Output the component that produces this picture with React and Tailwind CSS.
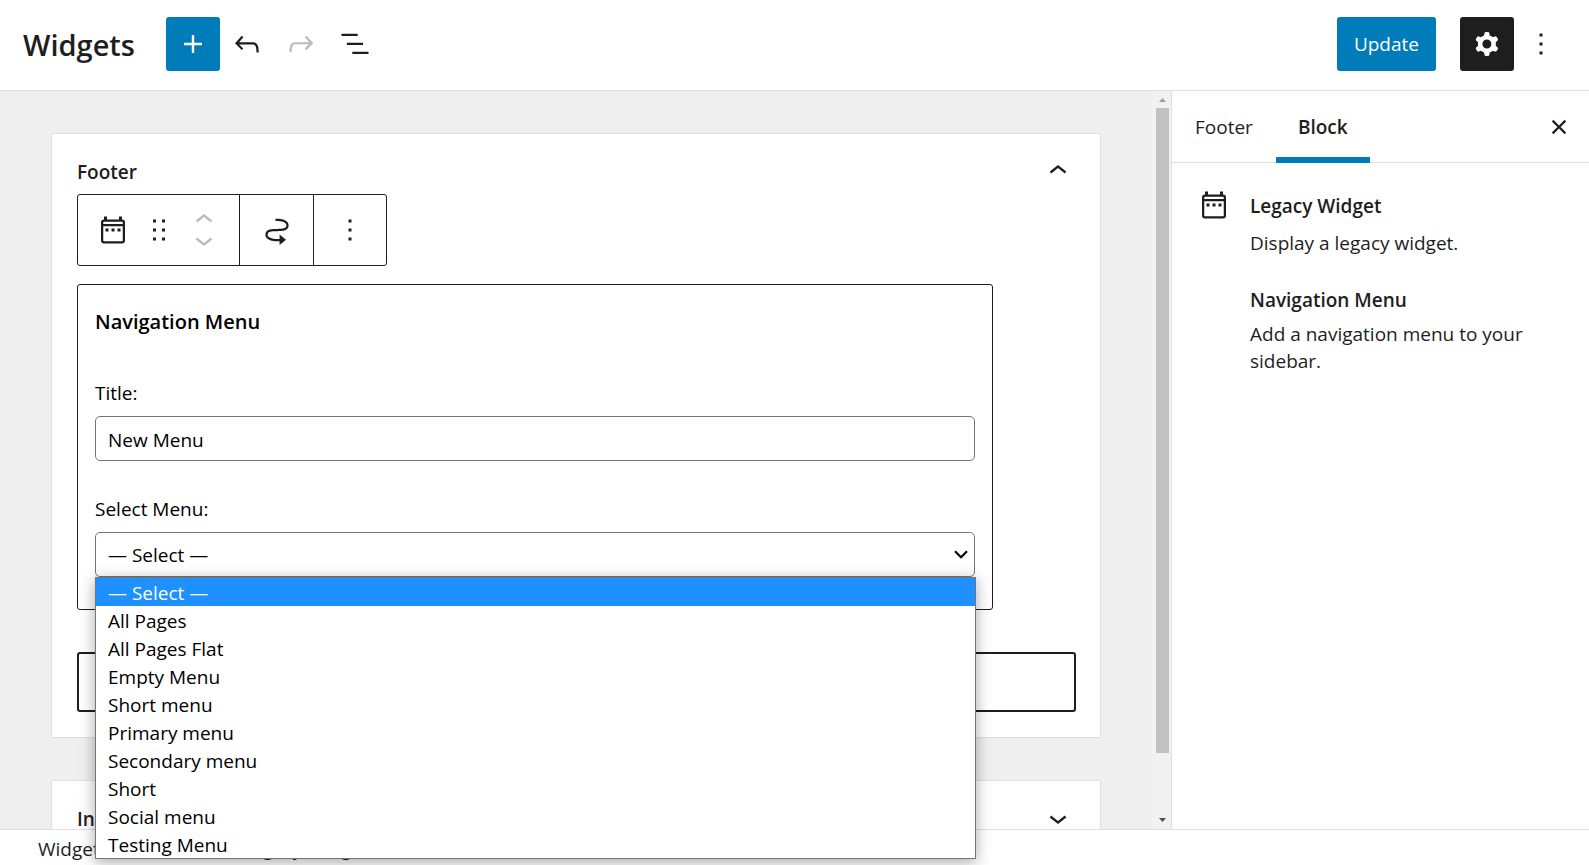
import React, { useState } from "react";
import clsx from "clsx";

const icons = {
  plus: "M18 11.2h-5.2V6h-1.6v5.2H6v1.6h5.2V18h1.6v-5.2H18z",
  undo: "M18.3 11.7c-.6-.6-1.4-.9-2.3-.9H6.7l2.9-3.3-1.1-1-4.5 5L8.5 16l1-1-2.7-2.7H16c.5 0 .9.2 1.3.5 1 1 1 3.4 1 4.5v.3h1.5v-.2c0-1.5 0-4.3-1.5-5.7z",
  redo: "M15.6 6.5l-1.1 1 2.9 3.3H8c-.9 0-1.7.3-2.3.9-1.4 1.5-1.4 4.2-1.4 5.6v.2h1.5v-.3c0-1.1 0-3.5 1-4.5.3-.3.7-.5 1.3-.5h9.2L14.5 15l1.1 1.1 4.6-4.6-4.6-5z",
  listView:
    "M13.8 5.2H3v1.5h10.8V5.2zm-3.6 12v1.5H21v-1.5H10.2zm7.2-6H6.6v1.5h10.8v-1.5z",
  cog: "M10.289 4.836A1 1 0 0111.275 4h1.306a1 1 0 01.987.836l.244 1.466c.787.26 1.503.679 2.108 1.218l1.393-.522a1 1 0 011.216.437l.653 1.13a1 1 0 01-.23 1.273l-1.148.944a6.025 6.025 0 010 2.435l1.149.946a1 1 0 01.23 1.272l-.653 1.13a1 1 0 01-1.216.437l-1.394-.522c-.605.54-1.32.958-2.108 1.218l-.244 1.466a1 1 0 01-.987.836h-1.306a1 1 0 01-.986-.836l-.244-1.466a5.995 5.995 0 01-2.108-1.218l-1.394.522a1 1 0 01-1.217-.436l-.653-1.131a1 1 0 01.23-1.272l1.149-.946a6.026 6.026 0 010-2.435l-1.148-.944a1 1 0 01-.23-1.272l.653-1.131a1 1 0 011.217-.437l1.393.522a5.994 5.994 0 012.108-1.218l.244-1.466zM14.929 12a3 3 0 11-6 0 3 3 0 016 0z",
  more: "M13 19h-2v-2h2v2zm0-6h-2v-2h2v2zm0-6h-2V5h2v2z",
  drag: "M8 5h2v2H8zm6 0h2v2h-2zM8 11h2v2H8zm6 0h2v2h-2zM8 17h2v2H8zm6 0h2v2h-2z",
  chevronUp: "M6.5 12.4L12 8l5.5 4.4-.9 1.2L12 10l-4.5 3.6-1-1.2z",
  chevronDown: "M17.5 11.6L12 16l-5.5-4.4.9-1.2L12 14l4.5-3.6 1 1.2z",
  close:
    "M12 13.06l3.712 3.713 1.061-1.06L13.061 12l3.712-3.712-1.06-1.06L12 10.938 8.288 7.227l-1.061 1.06L10.939 12l-3.712 3.712 1.06 1.061L12 13.061z",
  widget:
    "M6 3h2v2h8V3h2v2a2 2 0 012 2v12a2 2 0 01-2 2H6a2 2 0 01-2-2V7a2 2 0 012-2V3zm12 3.500H6a.5.5 0 00-.5.5v1h13V7a.5.5 0 00-.5-.5zm.5 3h-13V19a.5.5 0 00.5.5h12a.5.5 0 00.5-.5V9.500zM11 11h2v2h-2v-2zm-4 0v2h2v-2H7zm8 2v-2h2v2h-2z",
  moveTo:
    "M19.75 9c0-1.257-.565-2.197-1.39-2.858-.797-.64-1.827-1.017-2.815-1.247-1.802-.42-3.703-.403-4.383-.396L11 4.5V6l.177-.001c.696-.006 2.416-.02 4.028.356.887.207 1.67.518 2.216.957.52.416.829.945.829 1.688 0 .592-.167.966-.407 1.23-.255.281-.656.508-1.236.674-1.19.34-2.82.346-4.607.346h-.077c-1.692 0-3.527 0-4.942.404-.732.209-1.424.545-1.935 1.108-.526.579-.796 1.33-.796 2.238 0 1.257.565 2.197 1.39 2.858.797.64 1.827 1.017 2.815 1.247 1.802.42 3.703.403 4.383.396L13 19.5h.714V22L18 18.5 13.714 15v3H13l-.177.001c-.696.006-2.416.02-4.028-.356-.887-.207-1.67-.518-2.216-.957-.52-.416-.829-.945-.829-1.688 0-.592.167-.966.407-1.23.255-.281.656-.508 1.237-.674 1.189-.34 2.819-.346 4.606-.346h.077c1.692 0 3.527 0 4.941-.404.732-.209 1.425-.545 1.936-1.108.526-.579.796-1.33.796-2.238z",
};

const Icon = ({ name, className }) => (
  <svg
    viewBox="0 0 24 24"
    fill="currentColor"
    fillRule="evenodd"
    className={clsx("size-9 shrink-0", className)}
    aria-hidden="true"
  >
    <path d={icons[name]} />
  </svg>
);

const IconButton = ({ icon, label, className, ...rest }) => (
  <button
    type="button"
    aria-label={label}
    className={clsx("flex shrink-0 items-center justify-center", className)}
    {...rest}
  >
    <Icon name={icon} />
  </button>
);

const menus = [
  "— Select —",
  "All Pages",
  "All Pages Flat",
  "Empty Menu",
  "Short menu",
  "Primary menu",
  "Secondary menu",
  "Short",
  "Social menu",
  "Testing Menu",
];

const Header = () => (
  <header className="flex h-[91px] shrink-0 items-center border-b border-[#e0e0e0] pr-[21px] pb-[3px] pl-[23px]">
    <h1 className="w-[143px] pt-[2px] text-[29px] leading-9 font-semibold">
      Widgets
    </h1>
    <IconButton
      icon="plus"
      label="Add block"
      className="size-[54px] rounded-[3px] bg-[#007cba] text-white"
    />
    <IconButton icon="undo" label="Undo" className="size-[54px]" />
    <IconButton
      icon="redo"
      label="Redo"
      className="size-[54px] text-[#bbbbbb]"
      disabled
    />
    <IconButton icon="listView" label="List View" className="size-[54px]" />
    <button
      type="button"
      className="ml-auto h-[54px] rounded-[3px] bg-[#007cba] px-[17px] pt-[2px] text-white"
    >
      Update
    </button>
    <IconButton
      icon="cog"
      label="Settings"
      className="ml-6 size-[54px] rounded-[3px] bg-[#1e1e1e] text-white"
    />
    <IconButton icon="more" label="Options" className="size-[54px]" />
  </header>
);

const BlockToolbar = () => (
  <div
    role="toolbar"
    aria-label="Block tools"
    className="flex h-[72px] w-[310px] divide-x divide-[#1e1e1e] rounded-[3px] border border-[#1e1e1e]"
  >
    <div className="flex flex-1 items-center justify-between px-[17px]">
      <IconButton icon="widget" label="Legacy Widget" />
      <IconButton icon="drag" label="Drag" />
      <div className="flex flex-col text-[#bbbbbb]">
        <IconButton icon="chevronUp" label="Move up" className="h-5" disabled />
        <IconButton
          icon="chevronDown"
          label="Move down"
          className="h-5"
          disabled
        />
      </div>
    </div>
    <IconButton icon="moveTo" label="Move to widget area" className="w-[74px]" />
    <IconButton icon="more" label="Options" className="w-[72px]" />
  </div>
);

const MenuSelect = () => {
  const [selected, setSelected] = useState(menus[0]);

  return (
    <div className="relative">
      <select
        id="nav-menu"
        value={selected}
        onChange={(e) => setSelected(e.target.value)}
        className="block h-[45px] w-full appearance-none rounded-[5px] border border-[#757575] bg-white px-3 pt-[2px] text-black"
      >
        {menus.map((menu) => (
          <option key={menu}>{menu}</option>
        ))}
      </select>
      <svg
        viewBox="0 0 14 9"
        className="pointer-events-none absolute top-[18px] right-[7px] h-[9px] w-[14px]"
        fill="none"
        stroke="black"
        strokeWidth="2.2"
        aria-hidden="true"
      >
        <path d="M1 1.200l6 6 6-6" />
      </svg>
      <ul
        role="listbox"
        aria-label="Select Menu"
        className="absolute top-full -right-px left-0 z-10 border border-[#767676] bg-white text-black shadow-[0_3px_14px_rgba(0,0,0,0.35)]"
      >
        {menus.map((menu) => (
          <li
            key={menu}
            role="option"
            aria-selected={menu === selected}
            onClick={() => setSelected(menu)}
            className={clsx(
              "h-7 px-3 leading-[30px]",
              menu === selected && "bg-[#1e90ff] text-white"
            )}
          >
            {menu}
          </li>
        ))}
      </ul>
    </div>
  );
};

const NavigationMenuWidget = () => (
  <form className="mt-[18px] max-w-[916px] rounded-[3px] border border-[#1e1e1e] px-[17px] pt-[23px] pb-8 text-black">
    <h3 className="text-[20px] leading-7 font-semibold">Navigation Menu</h3>
    <label htmlFor="nav-title" className="mt-[43px] block leading-7">
      Title:
    </label>
    <input
      id="nav-title"
      type="text"
      defaultValue="New Menu"
      className="mt-[9px] block h-[45px] w-full rounded-[5px] border border-[#757575] px-3 pt-[2px]"
    />
    <label htmlFor="nav-menu" className="mt-[34px] mb-[9px] block leading-7">
      Select Menu:
    </label>
    <MenuSelect />
  </form>
);

const AreaHeading = ({ title, open }) => (
  <h2>
    <button
      type="button"
      aria-expanded={open}
      className="flex h-9 w-full items-center justify-between font-semibold"
    >
      <span className="pt-[2px]">{title}</span>
      <Icon name={open ? "chevronUp" : "chevronDown"} />
    </button>
  </h2>
);

const Scrollbar = () => (
  <div
    className="flex w-[19px] flex-col items-center bg-[#f1f1f1] pl-[2px]"
    aria-hidden="true"
  >
    <svg viewBox="0 0 17 17" className="size-[17px]" fill="#a0a0a0">
      <path d="M5 11l3.500-4 3.500 4z" />
    </svg>
    <div className="w-[13px] flex-[645] bg-[#c1c1c1]" />
    <div className="flex-[59]" />
    <svg viewBox="0 0 17 17" className="size-[17px]" fill="#505050">
      <path d="M5 6l3.500 4 3.500-4z" />
    </svg>
  </div>
);

const Sidebar = () => (
  <aside className="w-[418px] shrink-0 border-l border-[#e0e0e0]">
    <div className="flex h-[72px] items-stretch border-b border-[#e0e0e0] pr-3">
      <button type="button" className="px-[23px] pt-[2px]">
        Footer
      </button>
      <button
        type="button"
        className="-mb-px border-b-6 border-[#007cba] px-[22px] pt-[6px] font-semibold"
      >
        Block
      </button>
      <IconButton icon="close" label="Close settings" className="ml-auto" />
    </div>
    <div className="flex gap-[18px] p-6">
      <Icon name="widget" />
      <div>
        <h2 className="mt-[5px] leading-7 font-semibold">Legacy Widget</h2>
        <p className="mt-[9px] leading-7">Display a legacy widget.</p>
        <h3 className="mt-[29px] leading-7 font-semibold">Navigation Menu</h3>
        <p className="mt-[7px] leading-[27px]">
          Add a navigation menu to your sidebar.
        </p>
      </div>
    </div>
  </aside>
);

const App = () => {
  return (
    <div className="flex h-screen flex-col bg-white font-['Open_Sans','Noto_Sans',sans-serif] text-[19px] text-[#1e1e1e]">
      <Header />
      <div className="flex min-h-0 flex-1">
        <main className="flex min-w-0 flex-1 bg-[#efefef]">
          <div className="flex flex-1 flex-col items-center gap-[42px] pt-[42px]">
            <section className="w-full max-w-[1050px] shrink-0 border border-[#e0e0e0] bg-white pt-[19px] pr-6 pb-[25px] pl-[25px]">
              <AreaHeading title="Footer" open />
              <div className="mt-[5px]">
                <BlockToolbar />
                <NavigationMenuWidget />
                <button
                  type="button"
                  aria-label="Add block"
                  className="mt-[42px] block h-[60px] w-full rounded-[3px] border-2 border-[#1e1e1e]"
                />
              </div>
            </section>
            <section className="min-h-0 w-full max-w-[1050px] flex-1 overflow-hidden border border-b-0 border-[#e0e0e0] bg-white pt-[19px] pr-6 pl-[25px]">
              <AreaHeading title="Inactive widgets" open={false} />
            </section>
          </div>
          <Scrollbar />
        </main>
        <Sidebar />
      </div>
      <footer className="flex h-9 shrink-0 items-center gap-4 border-t border-[#e0e0e0] pt-1 pl-[38px]">
        <span>Widgets</span>
        <span>›</span>
        <span>Footer</span>
        <span>›</span>
        <span>Legacy Widget</span>
      </footer>
    </div>
  );
};

export default App;
